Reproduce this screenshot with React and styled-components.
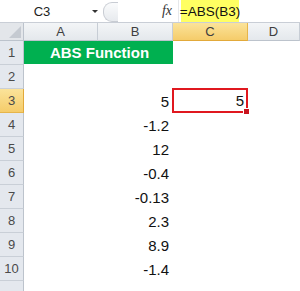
import React from "react";
import styled, { createGlobalStyle } from "styled-components";

const Global = createGlobalStyle`
  html, body { margin: 0; padding: 0; background: #fff; }
  body { width: 300px; height: 291px; overflow: hidden; font-family: "Liberation Sans", Arial, sans-serif; }
`;

const Page = styled.div`
  width: 300px;
  height: 291px;
  overflow: hidden;
  background: #fff;
`;

const FormulaBar = styled.div`
  display: flex;
  align-items: stretch;
  height: 22px;
  border-bottom: 1px solid #c9ced6;
  background: #fff;
`;

const NameBox = styled.div`
  width: 100px;
  display: flex;
  align-items: center;
  font-size: 13px;
  color: #222;
`;

const NameText = styled.span`
  flex: 1;
  text-align: center;
  margin-right: 8px;
`;

const Arrow = styled.span`
  width: 0;
  height: 0;
  border-left: 3px solid transparent;
  border-right: 3px solid transparent;
  border-top: 3px solid #333;
  margin-right: 2px;
  margin-top: 1px;
`;

const Splitter = styled.div`
  width: 14px;
  margin-left: 3px;
  margin-top: 2px;
  height: 18px;
  border: 1px solid #c8ccd3;
  border-right: none;
  border-radius: 9px 0 0 9px;
  background: linear-gradient(#fafbfc, #e7eaee);
`;

const FxZone = styled.div`
  width: 54px;
  display: flex;
  align-items: center;
  justify-content: flex-end;
  padding-right: 6px;
  font-family: "Liberation Serif", serif;
  font-style: italic;
  font-size: 14px;
  color: #333;
  border-right: 1px solid #e6e8eb;
`;

const FormulaText = styled.div`
  margin-left: 2px;
  width: 58px;
  background: #ffff62;
  display: flex;
  align-items: center;
  justify-content: center;
  font-size: 13.5px;
  color: #111;
`;

const Grid = styled.div`
  display: grid;
  grid-template-columns: 24px 74px 75px 75px 52px;
  grid-template-rows: 18px repeat(11, 24px);
`;

const Corner = styled.div`
  background: #e3e6ea;
  border-right: 1px solid #bcc3cc;
  border-bottom: 1px solid #bcc3cc;
  position: relative;
  &::after {
    content: "";
    position: absolute;
    right: 2px;
    bottom: 2px;
    width: 0;
    height: 0;
    border-left: 12px solid transparent;
    border-bottom: 12px solid #c5cad1;
  }
`;

const ColHead = styled.div`
  background: ${(p) => (p.$active ? "linear-gradient(#fbe39a, #f5cc6a)" : "linear-gradient(#f3f5f7, #e4e8ec)")};
  border-right: 1px solid ${(p) => (p.$active ? "#e6b54a" : "#c7cdd5")};
  border-bottom: 1px solid ${(p) => (p.$active ? "#e2a93a" : "#bcc3cc")};
  display: flex;
  align-items: center;
  justify-content: center;
  font-size: 13px;
  color: #3e3e3e;
`;

const RowHead = styled.div`
  background: ${(p) => (p.$active ? "linear-gradient(#fbe39a, #f5cc6a)" : "#e4e8ee")};
  border-right: 1px solid ${(p) => (p.$active ? "#e2a93a" : "#bcc3cc")};
  border-bottom: 1px solid ${(p) => (p.$active ? "#e6b54a" : "#c9cfd7")};
  display: flex;
  align-items: center;
  justify-content: center;
  font-size: 13px;
  color: #4a4a4a;
`;

const Title = styled.div`
  grid-column: span 2;
  background: #00b050;
  color: #fff;
  font-weight: bold;
  font-size: 15px;
  display: flex;
  align-items: center;
  justify-content: center;
  padding-left: 2px;
  border-bottom: 1px solid #fff;
`;

const Cell = styled.div`
  display: flex;
  align-items: center;
  justify-content: flex-end;
  padding-right: 4px;
  font-size: 15px;
  color: #111;
  position: relative;
  ${(p) =>
    p.$selected &&
    `
    border: 2px solid #e0181f;
    padding-right: 2px;
    margin: -1px 0 0 -1px;
    &::after {
      content: "";
      position: absolute;
      right: -4px;
      bottom: -4px;
      width: 5px;
      height: 5px;
      background: #c8141e;
      border: 1px solid #fff;
    }
  `}
`;

const values = ["", "", "5", "-1.2", "12", "-0.4", "-0.13", "2.3", "8.9", "-1.4", ""];

export default function App() {
  return (
    <Page>
      <Global />
      <FormulaBar>
        <NameBox>
          <NameText>C3</NameText>
          <Arrow />
        </NameBox>
        <Splitter />
        <FxZone>fx</FxZone>
        <FormulaText>=ABS(B3)</FormulaText>
      </FormulaBar>
      <Grid>
        <Corner />
        <ColHead>A</ColHead>
        <ColHead>B</ColHead>
        <ColHead $active>C</ColHead>
        <ColHead>D</ColHead>

        <RowHead>1</RowHead>
        <Title>ABS Function</Title>
        <Cell />
        <Cell />

        {values.slice(1).map((v, i) => {
          const r = i + 2;
          return (
            <React.Fragment key={r}>
              <RowHead $active={r === 3}>{r <= 10 ? r : ""}</RowHead>
              <Cell />
              <Cell>{v}</Cell>
              <Cell $selected={r === 3}>{r === 3 ? "5" : ""}</Cell>
              <Cell />
            </React.Fragment>
          );
        })}
      </Grid>
    </Page>
  );
}
